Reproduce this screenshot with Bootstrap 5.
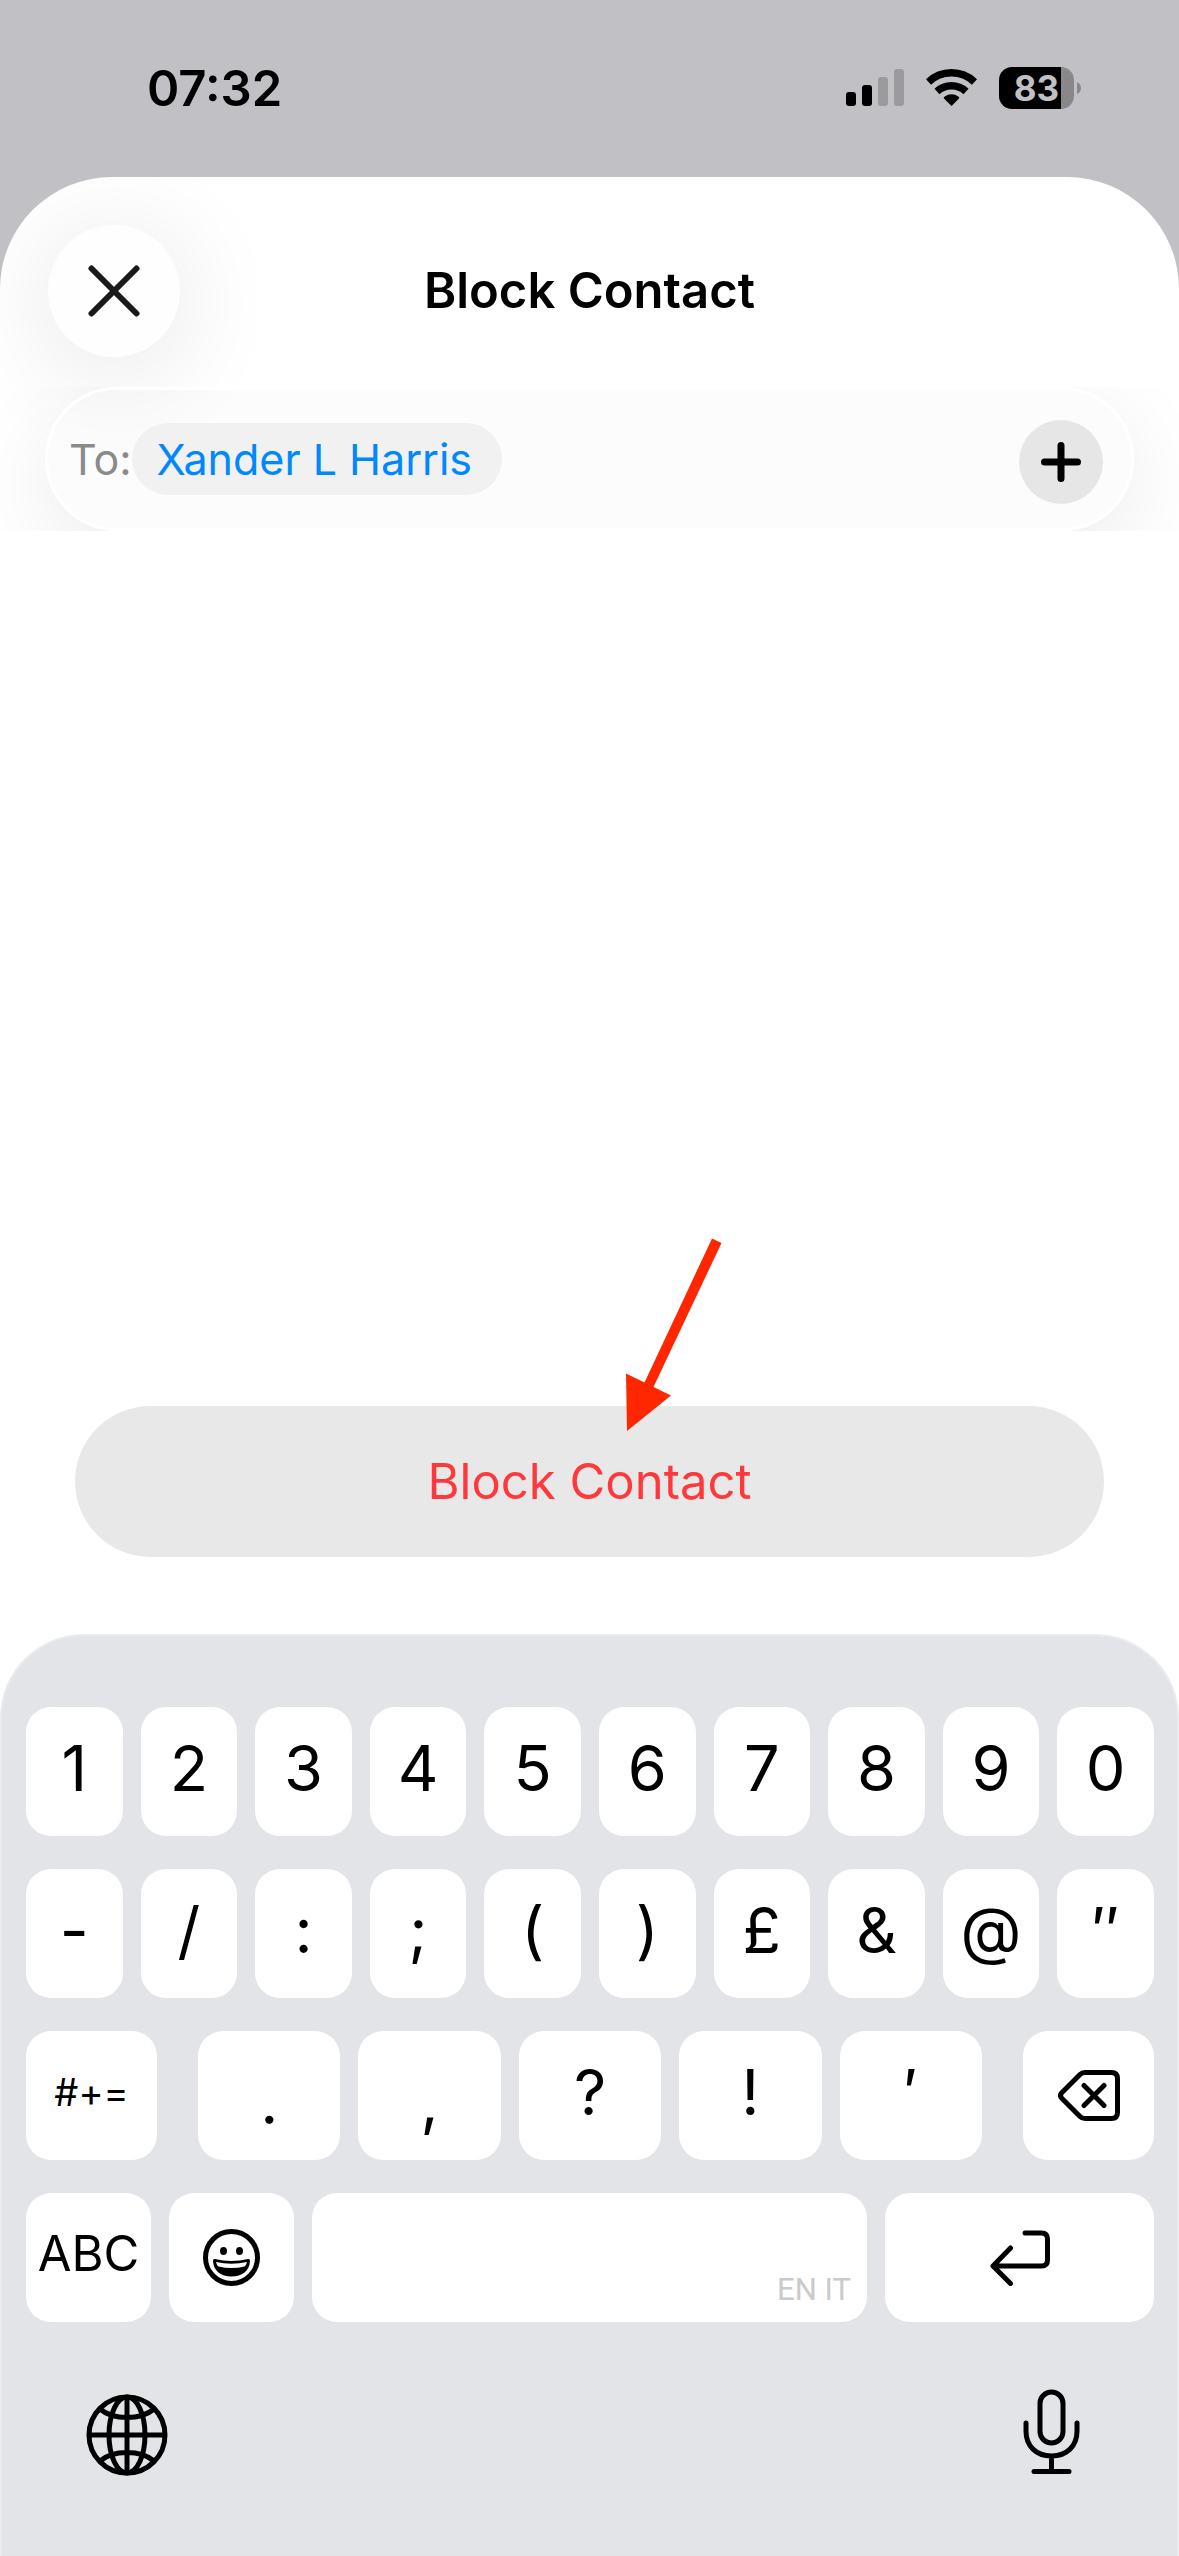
<!DOCTYPE html>
<html lang="en">
<head>
<meta charset="utf-8">
<meta name="viewport" content="width=device-width, initial-scale=1">
<title>Block Contact</title>
<link href="https://cdn.jsdelivr.net/npm/bootstrap@5.3.0/dist/css/bootstrap.min.css" rel="stylesheet">
<style>
  body { background: #c1c0c5; color: #000; font-family: Inter, "Liberation Sans", sans-serif; font-size: 49px; line-height: 60px; }
  button { color: inherit; }
  svg { display: block; flex: none; }
  .status { height: 177px; padding: 0 98px 0 147px; }
  .status-icons { gap: 22px; padding-bottom: 2px; }
  .battery-body { width: 75px; height: 42px; border-radius: 13px; overflow: hidden; background: linear-gradient(90deg, #000 83%, #88888b 83%); color: #c1c0c5; font-size: 35px; line-height: 42px; }
  .sheet { background: #fff; border-radius: 112px 112px 0 0; overflow: hidden; }
  .sheet-head { display: grid; grid-template-columns: 132px 1fr 132px; align-items: center; height: 210px; padding: 18px 48px 0; align-content: center; }
  .sheet-title { font-size: 49px; line-height: 60px; }
  .close-btn { width: 132px; height: 132px; background: #fefefe; box-shadow: 0 12px 110px rgba(0,0,0,.11); color: #1a1a1a; }
  .to-strip { height: 144px; padding: 0 45px; overflow: hidden; }
  .to-field { height: 144px; border: 3px solid #fff; border-radius: 72px; background: rgba(0,0,0,.012); box-shadow: 0 24px 90px rgba(0,0,0,.08); padding: 0 28px 0 21px; font-size: 43px; }
  .to-label { color: #8a8a8a; }
  .chip { height: 72px; padding: 0 30px 0 25px; border-radius: 36px; background: #f1f1f1; color: #08f; line-height: 72px; }
  .to-input { width: 0; min-width: 0; outline: 0; font-size: 43px; }
  .add-btn { flex: none; width: 84px; height: 84px; background: #e6e6e6; margin-top: 5px; }
  .action { position: relative; padding: 0 75px; margin-bottom: 77px; }
  .block-btn { height: 151px; border-radius: 76px; background: #e8e8e8; color: #ff383c; font-size: 49px; }
  .pointer { position: absolute; left: 53%; bottom: 126px; pointer-events: none; }
  .keyboard { background: #e2e4e8; border: 2px solid #e9ebef; border-bottom: 0; border-radius: 84px 84px 0 0; padding: 71px 23px 0 24px; }
  .key-rows { gap: 33px; }
  .key-row { gap: 18px; }
  .key { flex: 1 1 0; min-width: 0; height: 129px; padding: 0 0 7px; border: 0; border-radius: 25px; background: #fff; font-size: 63px; line-height: 122px; text-align: center; }
  .key-low { padding: 11px 0 0; line-height: 118px; }
  .key-icon { display: flex; align-items: center; justify-content: center; padding: 0; }
  .key-side { flex: 0 0 131px; }
  .key-fn { flex: 125 1 0; }
  .key-alt { font-size: 38px; }
  .key-abc { font-size: 49px; }
  .key-space { flex: 555 1 0; display: flex; align-items: flex-end; justify-content: flex-end; padding: 0; }
  .key-langs { padding: 0 16px 12px; color: #cacaca; font-family: Roboto, "Liberation Sans", sans-serif; font-size: 31px; line-height: 40px; }
  .key-return { flex: 269 1 0; }
  .key-mid { gap: 18px; margin: 0 23px; }
  .dock { height: 234px; padding: 67px 74px 0 60px; }
</style>
<script src="https://cdn.jsdelivr.net/npm/bootstrap@5.3.0/dist/js/bootstrap.bundle.min.js"></script>
</head>
<body>
<div class="min-vh-100 d-flex flex-column">
  <header class="status d-flex justify-content-between align-items-center">
    <span class="fw-semibold">07:32</span>
    <div class="status-icons d-flex align-items-center">
      <svg width="58" height="37" viewBox="0 0 58 37" aria-hidden="true">
        <rect x="0" y="23" width="10" height="14" rx="3"/><rect x="16" y="16" width="10" height="21" rx="3"/>
        <rect x="32" y="8" width="10" height="29" rx="3" fill="#9b9b9e"/><rect x="48" y="0" width="10" height="37" rx="3" fill="#9b9b9e"/>
      </svg>
      <svg width="51" height="37" viewBox="0 0 51 37" aria-hidden="true">
        <g fill="none" stroke="#000" stroke-width="7.500"><path d="M2.500 13a33.500 33.500 0 0 1 46 0"/><path d="M11 22.500a21.500 21.500 0 0 1 29 0"/></g>
        <path d="M25.500 37l-7.500-7.500q-.8-1 .4-1.800a12.500 12.500 0 0 1 14.200 0q1.200.8.400 1.800z"/>
      </svg>
      <div class="d-flex align-items-center">
        <div class="battery-body text-center fw-bold">83</div>
        <svg width="7" height="14" viewBox="0 0 7 14" fill="#88888b" aria-hidden="true"><path d="M3 1q4 2 4 6t-4 6z"/></svg>
      </div>
    </div>
  </header>

  <main class="sheet flex-grow-1 d-flex flex-column">
    <div class="sheet-head">
      <button class="close-btn btn rounded-circle p-0 border-0 d-flex align-items-center justify-content-center" type="button" aria-label="Close">
        <svg width="52" height="52" viewBox="0 0 52 52" fill="none" stroke="currentColor" stroke-width="6" stroke-linecap="round"><path d="M3.500 3.500l45 45M48.500 3.500l-45 45"/></svg>
      </button>
      <h1 class="sheet-title m-0 text-center fw-semibold">Block Contact</h1>
    </div>

    <div class="to-strip">
      <div class="to-field d-flex align-items-center">
        <label class="to-label" for="recipient">To:</label>
        <span class="chip text-nowrap">Xander L Harris</span>
        <input id="recipient" class="to-input flex-grow-1 border-0 bg-transparent p-0" type="text">
        <button class="add-btn btn rounded-circle border-0 p-0 d-flex align-items-center justify-content-center" type="button" aria-label="Add contact">
          <svg width="40" height="40" viewBox="0 0 40 40" stroke="#000" stroke-width="7" stroke-linecap="round"><path d="M20 3.500v33M3.500 20h33"/></svg>
        </button>
      </div>
    </div>

    <div class="flex-grow-1"></div>

    <div class="action">
      <button class="block-btn w-100 border-0 p-0" type="button">Block Contact</button>
      <svg class="pointer" width="97" height="193" viewBox="0 0 97 193" fill="#ff2600" aria-hidden="true"><path d="M87 0.500L96.500 5L28.500 149L46 157.500L2 193L1 135.500L19.500 144.500Z"/></svg>
    </div>

    <section class="keyboard" aria-label="Keyboard">
      <div class="key-rows d-flex flex-column">
        <div class="key-row d-flex">
          <button class="key" type="button">1</button><button class="key" type="button">2</button><button class="key" type="button">3</button><button class="key" type="button">4</button><button class="key" type="button">5</button><button class="key" type="button">6</button><button class="key" type="button">7</button><button class="key" type="button">8</button><button class="key" type="button">9</button><button class="key" type="button">0</button>
        </div>
        <div class="key-row d-flex">
          <button class="key" type="button">-</button><button class="key" type="button">/</button><button class="key" type="button">:</button><button class="key" type="button">;</button><button class="key" type="button">(</button><button class="key" type="button">)</button><button class="key" type="button">£</button><button class="key" type="button">&amp;</button><button class="key" type="button">@</button><button class="key" type="button">″</button>
        </div>
        <div class="key-row d-flex">
          <button class="key key-side key-alt" type="button">#+=</button>
          <div class="key-mid d-flex flex-grow-1">
            <button class="key key-low" type="button">.</button><button class="key key-low" type="button">,</button><button class="key" type="button">?</button><button class="key" type="button">!</button><button class="key" type="button">′</button>
          </div>
          <button class="key key-side key-icon" type="button" aria-label="Delete">
            <svg width="62" height="51" viewBox="0 0 62 51" fill="none" stroke="#000" stroke-width="5" stroke-linecap="round" stroke-linejoin="round"><path d="M27 2.500H53.500Q59.500 2.500 59.500 8.500V42.500Q59.500 48.500 53.500 48.500H27Q24 48.500 22 46.500L4 28.500Q1 25.500 4 22.500L22 4.500Q24 2.500 27 2.500ZM26 15.500L46 35.500M46 15.500L26 35.500"/></svg>
          </button>
        </div>
        <div class="key-row d-flex">
          <button class="key key-fn key-abc" type="button">ABC</button>
          <button class="key key-fn key-icon" type="button" aria-label="Emoji">
            <svg width="57" height="57" viewBox="0 0 57 57"><circle cx="28.500" cy="28.500" r="26" fill="none" stroke="#000" stroke-width="5"/><ellipse cx="20.500" cy="22" rx="3.500" ry="4"/><ellipse cx="36.500" cy="22" rx="3.500" ry="4"/><path d="M12 30q-2-.5-2 2c.5 10 8 15.500 18.500 15.500S46.500 42 47 32q0-2.500-2-2-16.500 4-33 0z"/><path d="M13 33q15.500 3.500 31 0-.5 3-2.500 4.500-13 3-26 0-2-1.500-2.500-4.500z" fill="#fff"/></svg>
          </button>
          <button class="key key-space" type="button"><span class="key-langs">EN IT</span></button>
          <button class="key key-return key-icon" type="button" aria-label="Return">
            <svg width="60" height="56" viewBox="0 0 60 56" fill="none" stroke="#000" stroke-width="5" stroke-linecap="round" stroke-linejoin="round"><path d="M35 3H51.500Q57.500 3 57.500 9V30Q57.500 36 51.500 36H3M20.500 18L3 36L20.500 53.500"/></svg>
          </button>
        </div>
      </div>
      <div class="dock d-flex justify-content-between align-items-start">
        <button class="btn p-0 border-0" type="button" aria-label="Next keyboard">
          <svg width="82" height="92" viewBox="0 0 82 92" fill="none" stroke="#000" stroke-width="5"><circle cx="41" cy="46" r="38"/><ellipse cx="41" cy="46" rx="18" ry="38"/><path d="M41 8V84M3 46H79M14 20Q24 28.500 41 28.500T68 20M14 72Q24 63.500 41 63.500T68 72"/></svg>
        </button>
        <button class="btn p-0 border-0" type="button" aria-label="Dictate">
          <svg width="57" height="86" viewBox="0 0 57 86" fill="none" stroke="#000" stroke-width="5" stroke-linecap="round"><rect x="17" y="3" width="23" height="51" rx="11.500"/><path d="M3 34V42C3 57 13 67 28.500 67S54 57 54 42V34M28.500 67V82.500M11 82.500H46"/></svg>
        </button>
      </div>
    </section>
  </main>
</div>
</body>
</html>
